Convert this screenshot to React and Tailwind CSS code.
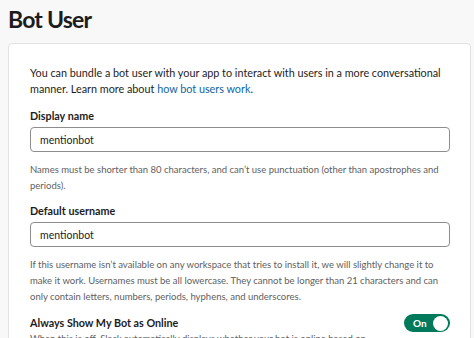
import React, { useState } from "react";

const Field = ({ label, value, className, children }) => (
  <div className={className}>
    <label className="block text-[10.75px] font-bold leading-[16px] text-[#1d1c1d]">
      {label}
    </label>
    <input
      type="text"
      defaultValue={value}
      className="mt-[3px] block w-full h-[25px] px-[9px] text-[10.5px] text-[#1d1c1d] bg-white border border-[#8d8d8d] rounded-[4px] focus:outline-none"
    />
    <p className="mt-[10px] text-[9.5px] leading-[16px] text-[#616061]">{children}</p>
  </div>
);

const App = () => {
  const [online, setOnline] = useState(true);

  return (
    <div className="min-h-screen bg-[#f8f8f8] pl-2 pr-[3px] font-['Lato','Noto_Sans',sans-serif] text-[#1d1c1d]">
      <h1 className="pt-[5px] text-[23px] font-bold leading-[29px] tracking-[-0.8px]">Bot User</h1>

      <div className="mt-[9px] bg-white border border-[#e2e2e2] rounded-[4px] pl-[21px] pr-[20px] pt-[21px] pb-6">
        <p className="text-[10.8px] leading-[16px]">
          You can bundle a bot user with your app to interact with users in a more conversational
          manner. Learn more about <a href="#" className="text-[#1264a3]">how bot users work</a>.
        </p>

        <Field className="mt-[11px]" label="Display name" value="mentionbot">
          Names must be shorter than 80 characters, and can’t use punctuation (other than apostrophes and
          periods).
        </Field>

        <Field className="mt-[9px]" label="Default username" value="mentionbot">
          If this username isn’t available on any workspace that tries to install it, we will slightly change it to
          make it work. Usernames must be all lowercase. They cannot be longer than 21 characters and can
          only contain letters, numbers, periods, hyphens, and underscores.
        </Field>

        <div className="mt-[10px] flex items-start justify-between gap-3">
          <div>
            <div className="text-[10.75px] font-bold leading-[16px]">Always Show My Bot as Online</div>
            <p className="text-[9.5px] leading-[16px] text-[#616061]">
              When this is off, Slack automatically displays whether your bot is online based on usage.
            </p>
          </div>
          <button
            onClick={() => setOnline(!online)}
            className="shrink-0 mt-[-1px] flex items-center w-[46px] h-[18px] rounded-full bg-[#007a5a] pl-[9px] pr-[2px]"
          >
            <span className="text-[10px] font-bold text-white">On</span>
            <span className="ml-auto w-[15px] h-[15px] rounded-full bg-white" />
          </button>
        </div>
      </div>
    </div>
  );
};

export default App;
